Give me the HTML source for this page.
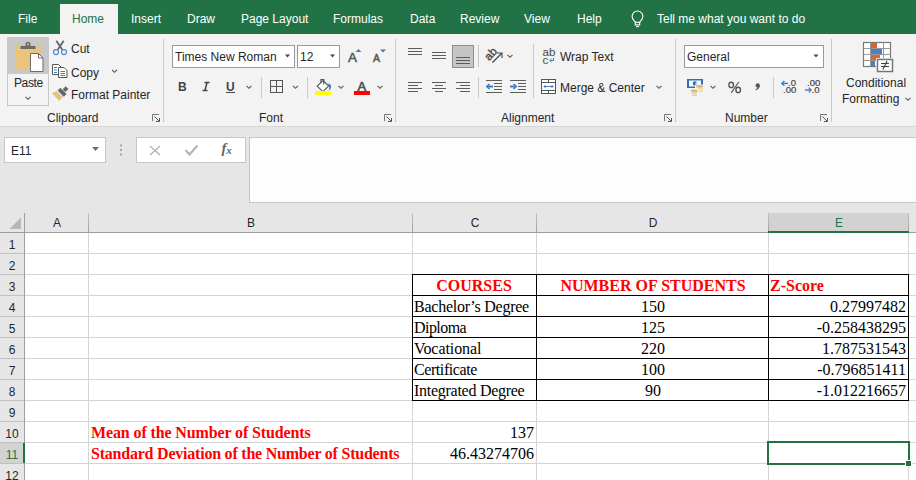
<!DOCTYPE html>
<html><head><meta charset="utf-8">
<style>
*{margin:0;padding:0;box-sizing:border-box}
html,body{width:916px;height:480px;overflow:hidden;background:#fff}
body{position:relative;font-family:"Liberation Sans",sans-serif;font-size:12px;color:#262626}
.a{position:absolute;white-space:nowrap}
.ch{position:absolute;font-size:12px;line-height:14px;color:#262626;text-align:center}
.rh{position:absolute;left:0;width:24px;font-size:12px;line-height:14px;color:#262626;text-align:center}
.cell{position:absolute;font-family:"Liberation Serif",serif;font-size:16px;line-height:18px;color:#000}
.red{color:#ff0000;font-weight:bold}
</style></head><body>
<div class="a" style="left:0;top:0;width:916px;height:34px;background:#217346"></div>
<div class="a" style="left:60px;top:4px;width:58px;height:31px;background:#f3f3f3"></div>
<div class="a" style="left:18px;top:12px;font-size:12px;line-height:14px;color:#ffffff;">File</div>
<div class="a" style="left:72px;top:12px;font-size:12px;line-height:14px;color:#217346;">Home</div>
<div class="a" style="left:131px;top:12px;font-size:12px;line-height:14px;color:#ffffff;">Insert</div>
<div class="a" style="left:187px;top:12px;font-size:12px;line-height:14px;color:#ffffff;">Draw</div>
<div class="a" style="left:241px;top:12px;font-size:12px;line-height:14px;color:#ffffff;">Page Layout</div>
<div class="a" style="left:333px;top:12px;font-size:12px;line-height:14px;color:#ffffff;">Formulas</div>
<div class="a" style="left:410px;top:12px;font-size:12px;line-height:14px;color:#ffffff;">Data</div>
<div class="a" style="left:460px;top:12px;font-size:12px;line-height:14px;color:#ffffff;">Review</div>
<div class="a" style="left:524px;top:12px;font-size:12px;line-height:14px;color:#ffffff;">View</div>
<div class="a" style="left:577px;top:12px;font-size:12px;line-height:14px;color:#ffffff;">Help</div>
<div class="a" style="left:657px;top:12px;font-size:12px;line-height:14px;color:#ffffff;">Tell me what you want to do</div>
<div class="a" style="left:0;top:34px;width:916px;height:92px;background:#f3f3f3"></div>
<div class="a" style="left:0;top:126px;width:916px;height:1px;background:#d6d6d6"></div>
<div class="a" style="left:163px;top:39px;width:1px;height:83px;background:#c8c8c8"></div>
<div class="a" style="left:395px;top:39px;width:1px;height:83px;background:#c8c8c8"></div>
<div class="a" style="left:675px;top:39px;width:1px;height:83px;background:#c8c8c8"></div>
<div class="a" style="left:831px;top:39px;width:1px;height:83px;background:#c8c8c8"></div>
<div class="a" style="left:7px;top:37px;width:42px;height:37px;background:#c8c8c8"></div>
<div class="a" style="left:7px;top:73px;width:42px;height:33px;border:1px solid #c8c8c8;border-top:none"></div>
<div class="a" style="left:14px;top:76px;font-size:12px;line-height:14px;color:#262626;letter-spacing:-0.4px">Paste</div>
<div class="a" style="left:71px;top:42px;font-size:12px;line-height:14px;color:#262626;">Cut</div>
<div class="a" style="left:71px;top:66px;font-size:12px;line-height:14px;color:#262626;">Copy</div>
<div class="a" style="left:71px;top:88px;font-size:12px;line-height:14px;color:#262626;">Format Painter</div>
<div class="a" style="left:47px;top:111px;font-size:12px;line-height:14px;color:#262626;">Clipboard</div>
<div class="a" style="left:259px;top:111px;font-size:12px;line-height:14px;color:#262626;">Font</div>
<div class="a" style="left:501px;top:111px;font-size:12px;line-height:14px;color:#262626;">Alignment</div>
<div class="a" style="left:725px;top:111px;font-size:12px;line-height:14px;color:#262626;">Number</div>
<div class="a" style="left:172px;top:45px;width:123px;height:23px;background:#fff;border:1px solid #9a9a9a"></div>
<div class="a" style="left:297px;top:45px;width:43px;height:23px;background:#fff;border:1px solid #9a9a9a"></div>
<div class="a" style="left:175px;top:50px;font-size:12px;line-height:14px;color:#262626;">Times New Roman</div>
<div class="a" style="left:300px;top:50px;font-size:12px;line-height:14px;color:#262626;">12</div>
<div class="a" style="left:684px;top:45px;width:140px;height:23px;background:#fff;border:1px solid #9a9a9a"></div>
<div class="a" style="left:687px;top:50px;font-size:12px;line-height:14px;color:#262626;">General</div>
<div class="a" style="left:560px;top:50px;font-size:12px;line-height:14px;color:#262626;">Wrap Text</div>
<div class="a" style="left:560px;top:81px;font-size:12px;line-height:14px;color:#262626;">Merge &amp; Center</div>
<div class="a" style="left:846px;top:76px;font-size:12px;line-height:14px;color:#262626;">Conditional</div>
<div class="a" style="left:842px;top:92px;font-size:12px;line-height:14px;color:#262626;">Formatting</div>
<div class="a" style="left:0;top:127px;width:916px;height:86px;background:#e6e6e6"></div>
<div class="a" style="left:4px;top:137px;width:102px;height:26px;background:#fff;border:1px solid #c6c6c6"></div>
<div class="a" style="left:11px;top:144px;font-size:12px;line-height:14px;color:#262626;">E11</div>
<div class="a" style="left:136px;top:137px;width:110px;height:26px;background:#fff;border:1px solid #c6c6c6"></div>
<div class="a" style="left:249px;top:137px;width:700px;height:66px;background:#fdfdfd;border:1px solid #c6c6c6"></div>
<svg class="a" style="left:0;top:0" width="916" height="213"><path d="M17,45 h22 a1.5,1.5 0 0 1 1.5,1.5 v22 a1.5,1.5 0 0 1 -1.5,1.5 h-22 a1.5,1.5 0 0 1 -1.5,-1.5 v-22 a1.5,1.5 0 0 1 1.5,-1.5 z" fill="#e9c47a" stroke="none" stroke-width="1" /><rect x="20.5" y="46" width="15" height="3" fill="#6b6b6b" stroke="none" stroke-width="1" /><path d="M25.5,46 v-2.5 a1.5,1.5 0 0 1 1.5,-1.5 h2 a1.5,1.5 0 0 1 1.5,1.5 v2.5 z" fill="#6b6b6b" stroke="none" stroke-width="1" /><rect x="27" y="43.5" width="2" height="1.5" fill="#e9c47a" stroke="none" stroke-width="1" /><path d="M30.5,53.5 h8 l4.5,4.5 v13.5 h-12.5 z" fill="#fff" stroke="#6b6b6b" stroke-width="1" /><path d="M38.5,53.5 v4.5 h4.5" fill="none" stroke="#6b6b6b" stroke-width="1" /><path d="M25.5,96.8 L28,99.3 L30.5,96.8" fill="none" stroke="#555" stroke-width="1.1" /><line x1="56.3" y1="40.8" x2="62.2" y2="49.6" stroke="#666" stroke-width="1.8" /><line x1="63.7" y1="40.8" x2="57.8" y2="49.6" stroke="#666" stroke-width="1.8" /><circle cx="56" cy="52.1" r="2.5" fill="none" stroke="#4a86c8" stroke-width="1.2"/><circle cx="64" cy="52.1" r="2.5" fill="none" stroke="#4a86c8" stroke-width="1.2"/><path d="M52.5,64.5 h6 l2.5,2.5 v7.5 h-8.5 z" fill="#fff" stroke="#555" stroke-width="1" /><path d="M58.5,67.5 h5.5 l3,3 v7 h-8.5 z" fill="#fff" stroke="#555" stroke-width="1" /><line x1="54" y1="67.5" x2="57" y2="67.5" stroke="#3d7cc9" stroke-width="1" /><line x1="54" y1="70" x2="57" y2="70" stroke="#3d7cc9" stroke-width="1" /><line x1="54" y1="72.5" x2="57" y2="72.5" stroke="#3d7cc9" stroke-width="1" /><line x1="60.5" y1="71.5" x2="65" y2="71.5" stroke="#3d7cc9" stroke-width="1" /><line x1="60.5" y1="73.5" x2="65" y2="73.5" stroke="#3d7cc9" stroke-width="1" /><line x1="60.5" y1="75.5" x2="65" y2="75.5" stroke="#3d7cc9" stroke-width="1" /><path d="M112.0,69.8 L114.5,72.3 L117.0,69.8" fill="none" stroke="#555" stroke-width="1.1" /><path d="M52,93.2 L56.6,91.3 L62.6,97.3 L59.2,101 Z" fill="#e8c07a" stroke="none" stroke-width="1" /><path d="M58,90.4 L60.4,88.2 L66.2,94 L63.8,96.4 Z" fill="#666" stroke="#666" stroke-width="0.8" stroke-linejoin="round"/><path d="M63,89.2 L65.8,86.6 L68.2,89 L65.4,91.8 Z" fill="#666" stroke="#666" stroke-width="0.6" stroke-linejoin="round"/><path d="M152.5,121 V114.5 H159" fill="none" stroke="#777" stroke-width="1" /><path d="M154.5,116.5 L159,121" fill="none" stroke="#555" stroke-width="1" /><path d="M159.5,118 V121.5 H156" fill="none" stroke="#555" stroke-width="1" /><path d="M384.5,121 V114.5 H391" fill="none" stroke="#777" stroke-width="1" /><path d="M386.5,116.5 L391,121" fill="none" stroke="#555" stroke-width="1" /><path d="M391.5,118 V121.5 H388" fill="none" stroke="#555" stroke-width="1" /><path d="M664.5,121 V114.5 H671" fill="none" stroke="#777" stroke-width="1" /><path d="M666.5,116.5 L671,121" fill="none" stroke="#555" stroke-width="1" /><path d="M671.5,118 V121.5 H668" fill="none" stroke="#555" stroke-width="1" /><path d="M820.5,121 V114.5 H827" fill="none" stroke="#777" stroke-width="1" /><path d="M822.5,116.5 L827,121" fill="none" stroke="#555" stroke-width="1" /><path d="M827.5,118 V121.5 H824" fill="none" stroke="#555" stroke-width="1" /><path d="M285.0,54.5 L290.0,54.5 L287.5,57.5 Z" fill="#444" stroke="none" stroke-width="1" /><path d="M330.0,54.5 L335.0,54.5 L332.5,57.5 Z" fill="#444" stroke="none" stroke-width="1" /><text x="348" y="62" font-family="Liberation Sans" font-size="13.5" fill="#555" stroke="#555" stroke-width="0.5">A</text><path d="M355.5,52 L358.5,49 L361.5,52 Z" fill="#3d7cc9" stroke="none" stroke-width="1" /><text x="373" y="62" font-family="Liberation Sans" font-size="10.5" fill="#555" stroke="#555" stroke-width="0.5">A</text><path d="M380,49.5 L386,49.5 L383,52.5 Z" fill="#3d7cc9" stroke="none" stroke-width="1" /><text x="178" y="91" font-family="Liberation Sans" font-weight="bold" font-size="12" fill="#444">B</text><path d="M204.5,82.5 H209.5 M202.5,90.5 H207.5 M207,82.5 L205,90.5" fill="none" stroke="#444" stroke-width="1.5" /><text x="226" y="90.5" font-family="Liberation Sans" font-weight="bold" font-size="12" fill="#444">U</text><line x1="226" y1="92.5" x2="235" y2="92.5" stroke="#444" stroke-width="1" /><path d="M246.5,85.8 L249,88.3 L251.5,85.8" fill="none" stroke="#555" stroke-width="1.1" /><line x1="261.5" y1="77" x2="261.5" y2="98" stroke="#c8c8c8" stroke-width="1" /><rect x="270.5" y="80.5" width="12" height="12" fill="none" stroke="#555" stroke-width="1" /><line x1="276.5" y1="80.5" x2="276.5" y2="92.5" stroke="#555" stroke-width="1" /><line x1="270.5" y1="86.5" x2="282.5" y2="86.5" stroke="#555" stroke-width="1" /><path d="M293.0,85.8 L295.5,88.3 L298.0,85.8" fill="none" stroke="#555" stroke-width="1.1" /><line x1="307.5" y1="77" x2="307.5" y2="98" stroke="#c8c8c8" stroke-width="1" /><path d="M317.2,86.2 L323,80.6 L328.8,86 L322.8,91.6 Z" fill="#fff" stroke="#555" stroke-width="1.1" /><path d="M321,83 V79.5 H323.8 V84.5" fill="none" stroke="#555" stroke-width="1.2" /><path d="M328.2,83.2 Q332.2,84.6 330.8,88.6 Q330,90.2 328.6,90.8 Q329.6,88 329.2,86.4 Z" fill="#3d7cc9" stroke="none" stroke-width="1" /><rect x="315" y="91" width="16" height="4" fill="#ffff00" stroke="none" stroke-width="1" /><path d="M338.5,85.8 L341,88.3 L343.5,85.8" fill="none" stroke="#555" stroke-width="1.1" /><text x="357.5" y="90.5" font-family="Liberation Sans" font-size="13" fill="#555" stroke="#555" stroke-width="0.7">A</text><rect x="354" y="91" width="16" height="4" fill="#ff0000" stroke="none" stroke-width="1" /><path d="M377.5,85.8 L380,88.3 L382.5,85.8" fill="none" stroke="#555" stroke-width="1.1" /><line x1="408" y1="48.5" x2="422" y2="48.5" stroke="#5c5c5c" stroke-width="1" /><line x1="408" y1="51.5" x2="422" y2="51.5" stroke="#5c5c5c" stroke-width="1" /><line x1="408" y1="54.5" x2="422" y2="54.5" stroke="#5c5c5c" stroke-width="1" /><line x1="432" y1="52.5" x2="446" y2="52.5" stroke="#5c5c5c" stroke-width="1" /><line x1="432" y1="55.5" x2="446" y2="55.5" stroke="#5c5c5c" stroke-width="1" /><line x1="432" y1="58.5" x2="446" y2="58.5" stroke="#5c5c5c" stroke-width="1" /><rect x="452.5" y="45.5" width="21" height="22" fill="#c5c5c5" stroke="#8c8c8c" stroke-width="1" /><line x1="456" y1="57.5" x2="470" y2="57.5" stroke="#5c5c5c" stroke-width="1" /><line x1="456" y1="60.5" x2="470" y2="60.5" stroke="#5c5c5c" stroke-width="1" /><line x1="456" y1="63.5" x2="470" y2="63.5" stroke="#5c5c5c" stroke-width="1" /><line x1="478.5" y1="45" x2="478.5" y2="67" stroke="#c8c8c8" stroke-width="1" /><text x="0" y="0" font-family="Liberation Sans" font-size="11.5" fill="#444" stroke="#444" stroke-width="0.35" transform="translate(489.2,61.2) rotate(-48)">ab</text><line x1="492.5" y1="62.5" x2="501.5" y2="53.5" stroke="#444" stroke-width="1.2" /><path d="M497,53 L502,53 L502,58" fill="none" stroke="#444" stroke-width="1.1" /><path d="M507.5,54.8 L510,57.3 L512.5,54.8" fill="none" stroke="#555" stroke-width="1.1" /><line x1="533.5" y1="44" x2="533.5" y2="98" stroke="#c8c8c8" stroke-width="1" /><text x="542.5" y="56" font-family="Liberation Sans" font-size="11.5" fill="#555" stroke="#555" stroke-width="0.15">ab</text><text x="542.5" y="63.5" font-family="Liberation Sans" font-size="11.5" fill="#555" stroke="#555" stroke-width="0.15">c</text><path d="M553.5,58 v2.5 h-3.5" fill="none" stroke="#3d7cc9" stroke-width="1" /><path d="M551.5,58.8 l-1.8,1.7 l1.8,1.7" fill="none" stroke="#3d7cc9" stroke-width="1" /><line x1="408" y1="82.5" x2="422" y2="82.5" stroke="#5c5c5c" stroke-width="1" /><line x1="408" y1="85.5" x2="418" y2="85.5" stroke="#5c5c5c" stroke-width="1" /><line x1="408" y1="88.5" x2="422" y2="88.5" stroke="#5c5c5c" stroke-width="1" /><line x1="408" y1="91.5" x2="418" y2="91.5" stroke="#5c5c5c" stroke-width="1" /><line x1="432" y1="82.5" x2="446" y2="82.5" stroke="#5c5c5c" stroke-width="1" /><line x1="435" y1="85.5" x2="443" y2="85.5" stroke="#5c5c5c" stroke-width="1" /><line x1="432" y1="88.5" x2="446" y2="88.5" stroke="#5c5c5c" stroke-width="1" /><line x1="435" y1="91.5" x2="443" y2="91.5" stroke="#5c5c5c" stroke-width="1" /><line x1="456" y1="82.5" x2="470" y2="82.5" stroke="#5c5c5c" stroke-width="1" /><line x1="460" y1="85.5" x2="470" y2="85.5" stroke="#5c5c5c" stroke-width="1" /><line x1="456" y1="88.5" x2="470" y2="88.5" stroke="#5c5c5c" stroke-width="1" /><line x1="460" y1="91.5" x2="470" y2="91.5" stroke="#5c5c5c" stroke-width="1" /><line x1="478.5" y1="77" x2="478.5" y2="98" stroke="#c8c8c8" stroke-width="1" /><line x1="486" y1="80.5" x2="502" y2="80.5" stroke="#5c5c5c" stroke-width="1" /><line x1="494" y1="83.5" x2="502" y2="83.5" stroke="#5c5c5c" stroke-width="1" /><line x1="494" y1="86.5" x2="502" y2="86.5" stroke="#5c5c5c" stroke-width="1" /><line x1="494" y1="89.5" x2="502" y2="89.5" stroke="#5c5c5c" stroke-width="1" /><line x1="486" y1="92.5" x2="502" y2="92.5" stroke="#5c5c5c" stroke-width="1" /><path d="M493,86.5 H487.5" fill="none" stroke="#3d7cc9" stroke-width="2" /><path d="M489.5,84 L486.8,86.5 L489.5,89" fill="none" stroke="#3d7cc9" stroke-width="1.6" /><line x1="510" y1="80.5" x2="526" y2="80.5" stroke="#5c5c5c" stroke-width="1" /><line x1="518" y1="83.5" x2="526" y2="83.5" stroke="#5c5c5c" stroke-width="1" /><line x1="518" y1="86.5" x2="526" y2="86.5" stroke="#5c5c5c" stroke-width="1" /><line x1="518" y1="89.5" x2="526" y2="89.5" stroke="#5c5c5c" stroke-width="1" /><line x1="510" y1="92.5" x2="526" y2="92.5" stroke="#5c5c5c" stroke-width="1" /><path d="M510,86.5 H515.5" fill="none" stroke="#3d7cc9" stroke-width="2" /><path d="M513.5,84 L516.2,86.5 L513.5,89" fill="none" stroke="#3d7cc9" stroke-width="1.6" /><rect x="541.5" y="79.5" width="14" height="14" fill="#fff" stroke="#555" stroke-width="1" /><line x1="541.5" y1="82.5" x2="555.5" y2="82.5" stroke="#555" stroke-width="1" /><line x1="541.5" y1="90.5" x2="555.5" y2="90.5" stroke="#555" stroke-width="1" /><line x1="548.5" y1="79.5" x2="548.5" y2="82.5" stroke="#555" stroke-width="1" /><line x1="548.5" y1="90.5" x2="548.5" y2="93.5" stroke="#555" stroke-width="1" /><line x1="544" y1="86.5" x2="553" y2="86.5" stroke="#3d7cc9" stroke-width="1" /><path d="M545.5,85 L544,86.5 L545.5,88" fill="none" stroke="#3d7cc9" stroke-width="1" /><path d="M551.5,85 L553,86.5 L551.5,88" fill="none" stroke="#3d7cc9" stroke-width="1" /><path d="M656.5,85.8 L659,88.3 L661.5,85.8" fill="none" stroke="#555" stroke-width="1.1" /><path d="M813.5,54.5 L818.5,54.5 L816,57.5 Z" fill="#444" stroke="none" stroke-width="1" /><rect x="687" y="79" width="16" height="9" fill="#2f6db5" stroke="none" stroke-width="1" /><rect x="689" y="80.5" width="12" height="6" fill="#fff" stroke="none" stroke-width="1" /><circle cx="695" cy="83.5" r="2.3" fill="#2f6db5"/><rect x="695.6" y="82.6" width="1.5" height="1.3" fill="#fff" stroke="none" stroke-width="1" /><rect x="695" y="84.5" width="9" height="4" fill="#f3f3f3" stroke="none" stroke-width="1" /><ellipse cx="699.6" cy="86.4" rx="3.5" ry="1.4" fill="#e8b56a"/><line x1="698" y1="88.9" x2="703" y2="88.9" stroke="#ecc489" stroke-width="1" /><line x1="698.5" y1="91.2" x2="703" y2="91.2" stroke="#ecc489" stroke-width="1" /><ellipse cx="694.2" cy="91" rx="3.5" ry="1.4" fill="#e8b56a"/><line x1="691.5" y1="93.4" x2="697" y2="93.4" stroke="#ecc489" stroke-width="1" /><line x1="692" y1="95.3" x2="697" y2="95.3" stroke="#ecc489" stroke-width="1" /><path d="M710.5,85.8 L713,88.3 L715.5,85.8" fill="none" stroke="#555" stroke-width="1.1" /><ellipse cx="731.2" cy="84.9" rx="2.3" ry="2.7" fill="none" stroke="#555" stroke-width="1.4"/><ellipse cx="738.2" cy="89.9" rx="2.3" ry="2.7" fill="none" stroke="#555" stroke-width="1.4"/><line x1="731.2" y1="92.8" x2="738.8" y2="82" stroke="#555" stroke-width="1.2" /><circle cx="757.7" cy="85.4" r="2.1" fill="#555"/><path d="M759.7,85.6 Q760,88.6 756,90.2 L755.5,89.4 Q757.6,88.2 757.8,86.6 Z" fill="#555" stroke="none" stroke-width="1" /><line x1="773.5" y1="77" x2="773.5" y2="98" stroke="#c8c8c8" stroke-width="1" /><path d="M788,83.4 H782" fill="none" stroke="#3d7cc9" stroke-width="1.5" /><path d="M784.4,81 L781.8,83.4 L784.4,85.8" fill="none" stroke="#3d7cc9" stroke-width="1.3" /><text x="788" y="86" font-family="Liberation Sans" font-size="9.5" fill="#444" stroke="#444" stroke-width="0.2">.0</text><text x="783" y="93" font-family="Liberation Sans" font-size="9.5" fill="#444" stroke="#444" stroke-width="0.2">.00</text><text x="807" y="86" font-family="Liberation Sans" font-size="9.5" fill="#444" stroke="#444" stroke-width="0.2">.00</text><path d="M805,90 H811" fill="none" stroke="#3d7cc9" stroke-width="1.4" /><path d="M808.8,87.7 L811.2,90 L808.8,92.3" fill="none" stroke="#3d7cc9" stroke-width="1.2" /><text x="811.5" y="93" font-family="Liberation Sans" font-size="9.5" fill="#444" stroke="#444" stroke-width="0.2">.0</text><rect x="863.5" y="42.5" width="27" height="24" fill="#fff" stroke="#777" stroke-width="1.2" /><line x1="863.5" y1="48.5" x2="890.5" y2="48.5" stroke="#999" stroke-width="1" /><line x1="863.5" y1="54.5" x2="890.5" y2="54.5" stroke="#999" stroke-width="1" /><line x1="863.5" y1="60.5" x2="890.5" y2="60.5" stroke="#999" stroke-width="1" /><line x1="870.5" y1="42.5" x2="870.5" y2="66.5" stroke="#999" stroke-width="1" /><line x1="883.5" y1="42.5" x2="883.5" y2="66.5" stroke="#999" stroke-width="1" /><rect x="871" y="43" width="6" height="5" fill="#e0603a" stroke="none" stroke-width="1" /><rect x="871" y="49" width="11" height="5" fill="#4a7fc1" stroke="none" stroke-width="1" /><rect x="871" y="55" width="9" height="5" fill="#e0603a" stroke="none" stroke-width="1" /><rect x="871" y="61" width="4" height="5" fill="#4a7fc1" stroke="none" stroke-width="1" /><rect x="876" y="58" width="18" height="15" fill="#f3f3f3" stroke="none" stroke-width="1" /><rect x="877.5" y="59.5" width="15" height="12" fill="#fff" stroke="#777" stroke-width="1.5" /><line x1="881" y1="63.5" x2="889" y2="63.5" stroke="#444" stroke-width="1.1" /><line x1="881" y1="66.5" x2="889" y2="66.5" stroke="#444" stroke-width="1.1" /><line x1="887" y1="61" x2="883" y2="69.5" stroke="#444" stroke-width="1.1" /><path d="M905.5,97.8 L908,100.3 L910.5,97.8" fill="none" stroke="#555" stroke-width="1.1" /><path d="M92,147 L99,147 L95.5,151 Z" fill="#6d6d6d" stroke="none" stroke-width="1" /><rect x="120" y="144.5" width="2" height="2" fill="#a6a6a6" stroke="none" stroke-width="1" /><rect x="120" y="149" width="2" height="2" fill="#a6a6a6" stroke="none" stroke-width="1" /><rect x="120" y="153.5" width="2" height="2" fill="#a6a6a6" stroke="none" stroke-width="1" /><line x1="150" y1="146" x2="160" y2="155" stroke="#b5b5b5" stroke-width="1.5" /><line x1="160" y1="146" x2="150" y2="155" stroke="#b5b5b5" stroke-width="1.5" /><path d="M185.5,150 L189.5,154.5 L197.5,145.5" fill="none" stroke="#b5b5b5" stroke-width="2.2" /><text x="221.5" y="153" font-family="Liberation Serif" font-style="italic" font-weight="bold" font-size="15" fill="#666">f</text><text x="226.3" y="153.8" font-family="Liberation Serif" font-style="italic" font-weight="bold" font-size="11" fill="#666">x</text><path d="M635.3,22.3 L632.6,18.6 A5.4,5.4 0 1 1 642.4,18.6 L639.7,22.3" fill="none" stroke="#fff" stroke-width="1.1" /><rect x="635.3" y="22.3" width="4.4" height="2.6" fill="none" stroke="#fff" stroke-width="1.1" /><line x1="636" y1="26.6" x2="639" y2="26.6" stroke="#fff" stroke-width="1.1" /></svg>
<div class="a" style="left:0;top:213px;width:916px;height:19px;background:#e6e6e6"></div>
<div class="a" style="left:0;top:232px;width:24px;height:248px;background:#e6e6e6"></div>
<div class="a" style="left:769px;top:213px;width:139px;height:19px;background:#d2d2d2"></div>
<div class="a" style="left:769px;top:231px;width:139px;height:2px;background:#217346"></div>
<div class="a" style="left:0;top:443px;width:24px;height:20px;background:#d2d2d2"></div>
<svg class="a" style="left:9px;top:217px" width="12" height="12"><polygon points="12,0.5 12,12 0.5,12" fill="#b6b6b6"/></svg>
<div class="a" style="left:24px;top:253px;width:892px;height:1px;background:#d4d4d4"></div>
<div class="a" style="left:0;top:253px;width:24px;height:1px;background:#c0c0c0"></div>
<div class="a" style="left:24px;top:274px;width:892px;height:1px;background:#d4d4d4"></div>
<div class="a" style="left:0;top:274px;width:24px;height:1px;background:#c0c0c0"></div>
<div class="a" style="left:24px;top:295px;width:892px;height:1px;background:#d4d4d4"></div>
<div class="a" style="left:0;top:295px;width:24px;height:1px;background:#c0c0c0"></div>
<div class="a" style="left:24px;top:316px;width:892px;height:1px;background:#d4d4d4"></div>
<div class="a" style="left:0;top:316px;width:24px;height:1px;background:#c0c0c0"></div>
<div class="a" style="left:24px;top:337px;width:892px;height:1px;background:#d4d4d4"></div>
<div class="a" style="left:0;top:337px;width:24px;height:1px;background:#c0c0c0"></div>
<div class="a" style="left:24px;top:358px;width:892px;height:1px;background:#d4d4d4"></div>
<div class="a" style="left:0;top:358px;width:24px;height:1px;background:#c0c0c0"></div>
<div class="a" style="left:24px;top:379px;width:892px;height:1px;background:#d4d4d4"></div>
<div class="a" style="left:0;top:379px;width:24px;height:1px;background:#c0c0c0"></div>
<div class="a" style="left:24px;top:400px;width:892px;height:1px;background:#d4d4d4"></div>
<div class="a" style="left:0;top:400px;width:24px;height:1px;background:#c0c0c0"></div>
<div class="a" style="left:24px;top:421px;width:892px;height:1px;background:#d4d4d4"></div>
<div class="a" style="left:0;top:421px;width:24px;height:1px;background:#c0c0c0"></div>
<div class="a" style="left:24px;top:442px;width:892px;height:1px;background:#d4d4d4"></div>
<div class="a" style="left:0;top:442px;width:24px;height:1px;background:#c0c0c0"></div>
<div class="a" style="left:24px;top:463px;width:892px;height:1px;background:#d4d4d4"></div>
<div class="a" style="left:0;top:463px;width:24px;height:1px;background:#c0c0c0"></div>
<div class="a" style="left:24px;top:484px;width:892px;height:1px;background:#d4d4d4"></div>
<div class="a" style="left:0;top:484px;width:24px;height:1px;background:#c0c0c0"></div>
<div class="a" style="left:88px;top:232px;width:1px;height:248px;background:#d4d4d4"></div>
<div class="a" style="left:412px;top:232px;width:1px;height:248px;background:#d4d4d4"></div>
<div class="a" style="left:536px;top:232px;width:1px;height:248px;background:#d4d4d4"></div>
<div class="a" style="left:768px;top:232px;width:1px;height:248px;background:#d4d4d4"></div>
<div class="a" style="left:908px;top:232px;width:1px;height:248px;background:#d4d4d4"></div>
<div class="a" style="left:24px;top:213px;width:1px;height:19px;background:linear-gradient(#c4c4c4,#a0a0a0)"></div>
<div class="a" style="left:88px;top:213px;width:1px;height:19px;background:linear-gradient(#c4c4c4,#a0a0a0)"></div>
<div class="a" style="left:412px;top:213px;width:1px;height:19px;background:linear-gradient(#c4c4c4,#a0a0a0)"></div>
<div class="a" style="left:536px;top:213px;width:1px;height:19px;background:linear-gradient(#c4c4c4,#a0a0a0)"></div>
<div class="a" style="left:768px;top:213px;width:1px;height:19px;background:linear-gradient(#c4c4c4,#a0a0a0)"></div>
<div class="a" style="left:908px;top:213px;width:1px;height:19px;background:linear-gradient(#c4c4c4,#a0a0a0)"></div>
<div class="a" style="left:0;top:232px;width:916px;height:1px;background:#9e9e9e"></div>
<div class="a" style="left:24px;top:213px;width:1px;height:267px;background:#9e9e9e"></div>
<div class="a" style="left:768px;top:231px;width:141px;height:2px;background:#217346"></div>
<div class="a" style="left:23px;top:443px;width:2px;height:20px;background:#217346"></div>
<div class="ch" style="left:25px;width:64px;top:216px;color:#262626">A</div>
<div class="ch" style="left:89px;width:324px;top:216px;color:#262626">B</div>
<div class="ch" style="left:413px;width:124px;top:216px;color:#262626">C</div>
<div class="ch" style="left:537px;width:232px;top:216px;color:#262626">D</div>
<div class="ch" style="left:769px;width:140px;top:216px;color:#217346">E</div>
<div class="rh" style="top:238px;color:#262626">1</div>
<div class="rh" style="top:259px;color:#262626">2</div>
<div class="rh" style="top:280px;color:#262626">3</div>
<div class="rh" style="top:301px;color:#262626">4</div>
<div class="rh" style="top:322px;color:#262626">5</div>
<div class="rh" style="top:343px;color:#262626">6</div>
<div class="rh" style="top:364px;color:#262626">7</div>
<div class="rh" style="top:385px;color:#262626">8</div>
<div class="rh" style="top:406px;color:#262626">9</div>
<div class="rh" style="top:427px;color:#262626">10</div>
<div class="rh" style="top:448px;color:#217346">11</div>
<div class="rh" style="top:469px;color:#262626">12</div>
<div class="a" style="left:412px;top:274px;width:497px;height:1px;background:#000"></div>
<div class="a" style="left:412px;top:295px;width:497px;height:1px;background:#000"></div>
<div class="a" style="left:412px;top:316px;width:497px;height:1px;background:#000"></div>
<div class="a" style="left:412px;top:337px;width:497px;height:1px;background:#000"></div>
<div class="a" style="left:412px;top:358px;width:497px;height:1px;background:#000"></div>
<div class="a" style="left:412px;top:379px;width:497px;height:1px;background:#000"></div>
<div class="a" style="left:412px;top:400px;width:497px;height:1px;background:#000"></div>
<div class="a" style="left:412px;top:274px;width:1px;height:127px;background:#000"></div>
<div class="a" style="left:536px;top:274px;width:1px;height:127px;background:#000"></div>
<div class="a" style="left:768px;top:274px;width:1px;height:127px;background:#000"></div>
<div class="a" style="left:908px;top:274px;width:1px;height:127px;background:#000"></div>
<div class="cell red a" style="left:274.0px;width:400px;text-align:center;top:277px">COURSES</div>
<div class="cell red a" style="left:453.0px;width:400px;text-align:center;top:277px">NUMBER OF STUDENTS</div>
<div class="cell red a" style="left:770px;top:277px;letter-spacing:0px">Z-Score</div>
<div class="cell a" style="left:414px;top:298px;letter-spacing:-0.25px">Bachelor’s Degree</div>
<div class="cell a" style="left:453.0px;width:400px;text-align:center;top:298px">150</div>
<div class="cell a" style="right:10px;top:298px">0.27997482</div>
<div class="cell a" style="left:414px;top:319px;letter-spacing:-0.55px">Diploma</div>
<div class="cell a" style="left:453.0px;width:400px;text-align:center;top:319px">125</div>
<div class="cell a" style="right:10px;top:319px">-0.258438295</div>
<div class="cell a" style="left:414px;top:340px;letter-spacing:-0.07px">Vocational</div>
<div class="cell a" style="left:453.0px;width:400px;text-align:center;top:340px">220</div>
<div class="cell a" style="right:10px;top:340px">1.787531543</div>
<div class="cell a" style="left:414px;top:361px;letter-spacing:-0.42px">Certificate</div>
<div class="cell a" style="left:453.0px;width:400px;text-align:center;top:361px">100</div>
<div class="cell a" style="right:10px;top:361px">-0.796851411</div>
<div class="cell a" style="left:414px;top:382px;letter-spacing:-0.27px">Integrated Degree</div>
<div class="cell a" style="left:453.0px;width:400px;text-align:center;top:382px">90</div>
<div class="cell a" style="right:10px;top:382px">-1.012216657</div>
<div class="cell red a" style="left:91px;top:424px;letter-spacing:-0.12px">Mean of the Number of Students</div>
<div class="cell red a" style="left:91px;top:445px;letter-spacing:-0.22px">Standard Deviation of the Number of Students</div>
<div class="cell a" style="right:382px;top:424px">137</div>
<div class="cell a" style="right:382px;top:445px">46.43274706</div>
<div class="a" style="left:767px;top:441px;width:143px;height:24px;border:2px solid #217346"></div>
<div class="a" style="left:905px;top:460px;width:7px;height:7px;background:#217346;border:1px solid #fff"></div>
</body></html>
